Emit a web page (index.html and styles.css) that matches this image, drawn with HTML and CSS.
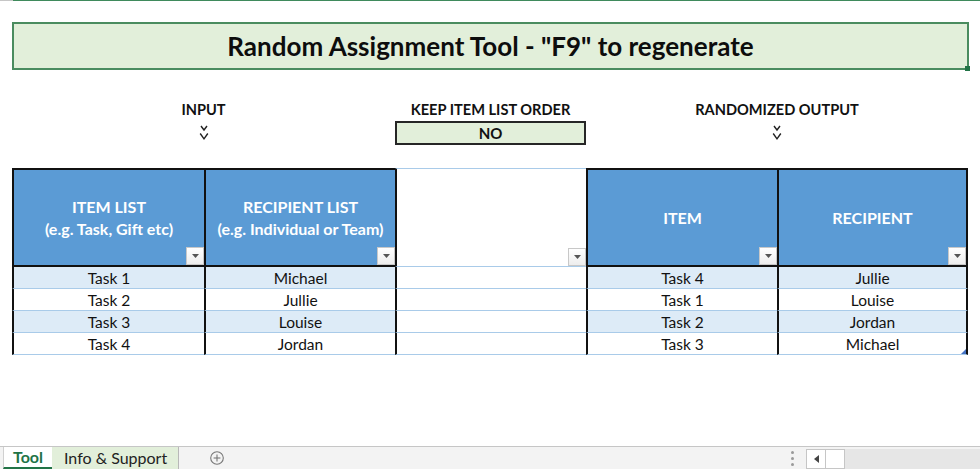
FILE: index.html
```html
<!DOCTYPE html>
<html>
<head>
<meta charset="utf-8">
<title>Random Assignment Tool</title>
<link rel="stylesheet" href="styles.css">
</head>
<body>
<div class="page">
  <div class="topline"><span class="tl-grey"></span><span class="tl-green"></span></div>

  <div class="title">Random Assignment Tool - "F9" to regenerate<span class="handle"></span></div>

  <div class="controls">
    <div class="ctl ctl-input">
      <div class="lbl">INPUT</div>
      <svg class="chev" viewBox="0 0 10 15"><polyline points="2,1 5,5 8,1"/><polyline points="1.2,8.5 5,13.8 8.8,8.5"/></svg>
    </div>
    <div class="ctl ctl-keep">
      <div class="lbl">KEEP ITEM LIST ORDER</div>
      <div class="nobox">NO</div>
    </div>
    <div class="ctl ctl-output">
      <div class="lbl">RANDOMIZED OUTPUT</div>
      <svg class="chev" viewBox="0 0 10 15"><polyline points="2,1 5,5 8,1"/><polyline points="1.2,8.5 5,13.8 8.8,8.5"/></svg>
    </div>
  </div>

  <div class="sheet">
    <div class="hc"><span>ITEM LIST</span><span>(e.g. Task, Gift etc)</span>
      <span class="dd"><svg viewBox="0 0 7 4"><polygon points="0,0 7,0 3.5,4"/></svg></span></div>
    <div class="hc"><span>RECIPIENT LIST</span><span>(e.g. Individual or Team)</span>
      <span class="dd"><svg viewBox="0 0 7 4"><polygon points="0,0 7,0 3.5,4"/></svg></span></div>
    <div class="hc blank">
      <span class="dd"><svg viewBox="0 0 7 4"><polygon points="0,0 7,0 3.5,4"/></svg></span></div>
    <div class="hc"><span>ITEM</span>
      <span class="dd"><svg viewBox="0 0 7 4"><polygon points="0,0 7,0 3.5,4"/></svg></span></div>
    <div class="hc last"><span>RECIPIENT</span>
      <span class="dd"><svg viewBox="0 0 7 4"><polygon points="0,0 7,0 3.5,4"/></svg></span></div>

    <div class="dc band">Task 1</div>
    <div class="dc band">Michael</div>
    <div class="dc blank"></div>
    <div class="dc band">Task 4</div>
    <div class="dc band last">Jullie</div>

    <div class="dc">Task 2</div>
    <div class="dc">Jullie</div>
    <div class="dc blank"></div>
    <div class="dc">Task 1</div>
    <div class="dc last">Louise</div>

    <div class="dc band">Task 3</div>
    <div class="dc band">Louise</div>
    <div class="dc blank"></div>
    <div class="dc band">Task 2</div>
    <div class="dc band last">Jordan</div>

    <div class="dc">Task 4</div>
    <div class="dc">Jordan</div>
    <div class="dc blank"></div>
    <div class="dc">Task 3</div>
    <div class="dc last">Michael<svg class="corner" viewBox="0 0 5 5"><polygon points="5,0 5,5 0,5"/></svg></div>
  </div>

  <div class="spacer"></div>

  <div class="tabbar">
    <div class="tab tab-active">Tool</div>
    <div class="tab tab-info">Info &amp; Support</div>
    <div class="addsheet"><svg viewBox="0 0 14 14"><circle cx="7" cy="7" r="6.3"/><line x1="7" y1="3.6" x2="7" y2="10.4"/><line x1="3.6" y1="7" x2="10.4" y2="7"/></svg></div>
    <div class="tb-fill"></div>
    <div class="dots"><i></i><i></i><i></i></div>
    <div class="hscroll">
      <div class="sbtn"><svg viewBox="0 0 5 8"><polygon points="5,0 5,8 0,4"/></svg></div>
      <div class="thumb"></div>
      <div class="track"></div>
    </div>
  </div>
</div>
</body>
</html>
```

FILE: styles.css
```css
* { box-sizing: border-box; }
html, body { margin: 0; padding: 0; }
body {
  background: #fff;
  width: 980px;
  height: 469px;
  overflow: hidden;
  font-family: Lato, "Liberation Sans", Arial, sans-serif;
  color: #111;
}
.page { display: flex; flex-direction: column; height: 469px; }

.topline { display: flex; height: 1px; flex: none; }
.tl-grey { width: 13px; background: #c6c6c6; }
.tl-green { flex: 1; background: #3f8a5c; }

.title {
  position: relative;
  flex: none;
  margin: 21px 0 0 12px;
  width: 957px;
  height: 48px;
  border: 2px solid #4a8c5f;
  background: #e2efda;
  display: flex;
  align-items: center;
  justify-content: center;
  font-weight: 700;
  font-size: 26px;
  color: #0d0d0d;
  white-space: nowrap;
}
.handle {
  position: absolute;
  right: -3px;
  bottom: -3px;
  width: 5px;
  height: 5px;
  background: #217346;
}

.controls {
  flex: none;
  display: grid;
  grid-template-columns: 192px 191px 191px 191px 191px;
  margin: 30px 0 0 12px;
}
.ctl { display: flex; flex-direction: column; align-items: center; }
.ctl-input { grid-column: 1 / 3; }
.ctl-keep { grid-column: 3 / 4; align-items: stretch; }
.ctl-output { grid-column: 4 / 6; }
.lbl {
  height: 20px;
  line-height: 20px;
  font-size: 14.6px;
  font-weight: 700;
  text-align: center;
  white-space: nowrap;
}
.chev {
  display: block;
  margin-top: 5px;
  width: 10px;
  height: 15px;
  fill: none;
  stroke: #222;
  stroke-width: 1.4;
}
.nobox {
  margin-top: 1px;
  height: 24px;
  border: 2px solid #262626;
  background: #e2efda;
  font-weight: 700;
  font-size: 15px;
  line-height: 20px;
  text-align: center;
}

.sheet {
  flex: none;
  display: grid;
  grid-template-columns: 192px 191px 191px 191px 191px;
  grid-template-rows: 99px repeat(4, 22px);
  margin: 23px 0 0 12px;
}
.hc {
  position: relative;
  display: flex;
  flex-direction: column;
  justify-content: center;
  align-items: center;
  background: #5b9bd5;
  color: #fff;
  font-weight: 700;
  font-size: 16px;
  line-height: 22px;
  white-space: nowrap;
  border-top: 2px solid #111;
  border-bottom: 2px solid #111;
  border-left: 2px solid #111;
}
.hc.blank {
  background: #fff;
  border-top: 1px solid #a9cbe9;
  border-bottom: 1px solid #a9cbe9;
}
.last { border-right: 2px solid #111; }
.dd {
  position: absolute;
  right: 0;
  bottom: 0;
  width: 18px;
  height: 18px;
  border: 1px solid #c8c8c8;
  background: linear-gradient(#ffffff, #ededed);
  display: flex;
  align-items: center;
  justify-content: center;
}
.dd svg { width: 7px; height: 4px; fill: #555; display: block; }

.dc {
  position: relative;
  display: flex;
  align-items: center;
  justify-content: center;
  padding-top: 2px;
  border-left: 2px solid #111;
  border-bottom: 1px solid #a9cbe9;
  font-size: 15.5px;
  line-height: 19px;
  color: #111;
}
.dc.band { background: #ddebf7; }
.dc.blank { background: #fff; }
.corner {
  position: absolute;
  right: 0;
  bottom: 0;
  width: 5px;
  height: 5px;
  fill: #4472c4;
}

.spacer { flex: 1; }

.tabbar {
  flex: none;
  height: 23px;
  border-top: 1px solid #c6c6c6;
  background: #f3f3f3;
  display: flex;
  align-items: stretch;
  padding-left: 3px;
  font-size: 16px;
}
.tab { display: flex; align-items: center; white-space: nowrap; padding-bottom: 1px; }
.tab-active {
  width: 49px;
  background: #fff;
  border-left: 1px solid #d0d0d0;
  border-bottom: 2px solid #217346;
  color: #217346;
  font-weight: 700;
  justify-content: center;
}
.tab-info {
  width: 127px;
  background: #e2efda;
  border-right: 1px solid #b8b8b8;
  padding-left: 12px;
  color: #222;
}
.addsheet { margin-left: 31px; display: flex; align-items: center; }
.addsheet svg {
  display: block;
  width: 14px;
  height: 14px;
  fill: none;
  stroke: #777;
  stroke-width: 1.1;
}
.tb-fill { flex: 1; }
.dots {
  width: 3px;
  margin-right: 12px;
  display: flex;
  flex-direction: column;
  justify-content: center;
  gap: 3px;
}
.dots i { display: block; width: 3px; height: 3px; border-radius: 50%; background: #9a9a9a; }
.hscroll { width: 174px; margin-top: 2px; display: flex; }
.sbtn {
  width: 20px;
  background: #fff;
  border: 1px solid #c6c6c6;
  display: flex;
  align-items: center;
  justify-content: center;
}
.sbtn svg { width: 5px; height: 8px; fill: #444; display: block; }
.thumb { width: 19px; background: #fff; border: 1px solid #c6c6c6; border-left: none; }
.track { flex: 1; background: #e6e6e6; }
```
